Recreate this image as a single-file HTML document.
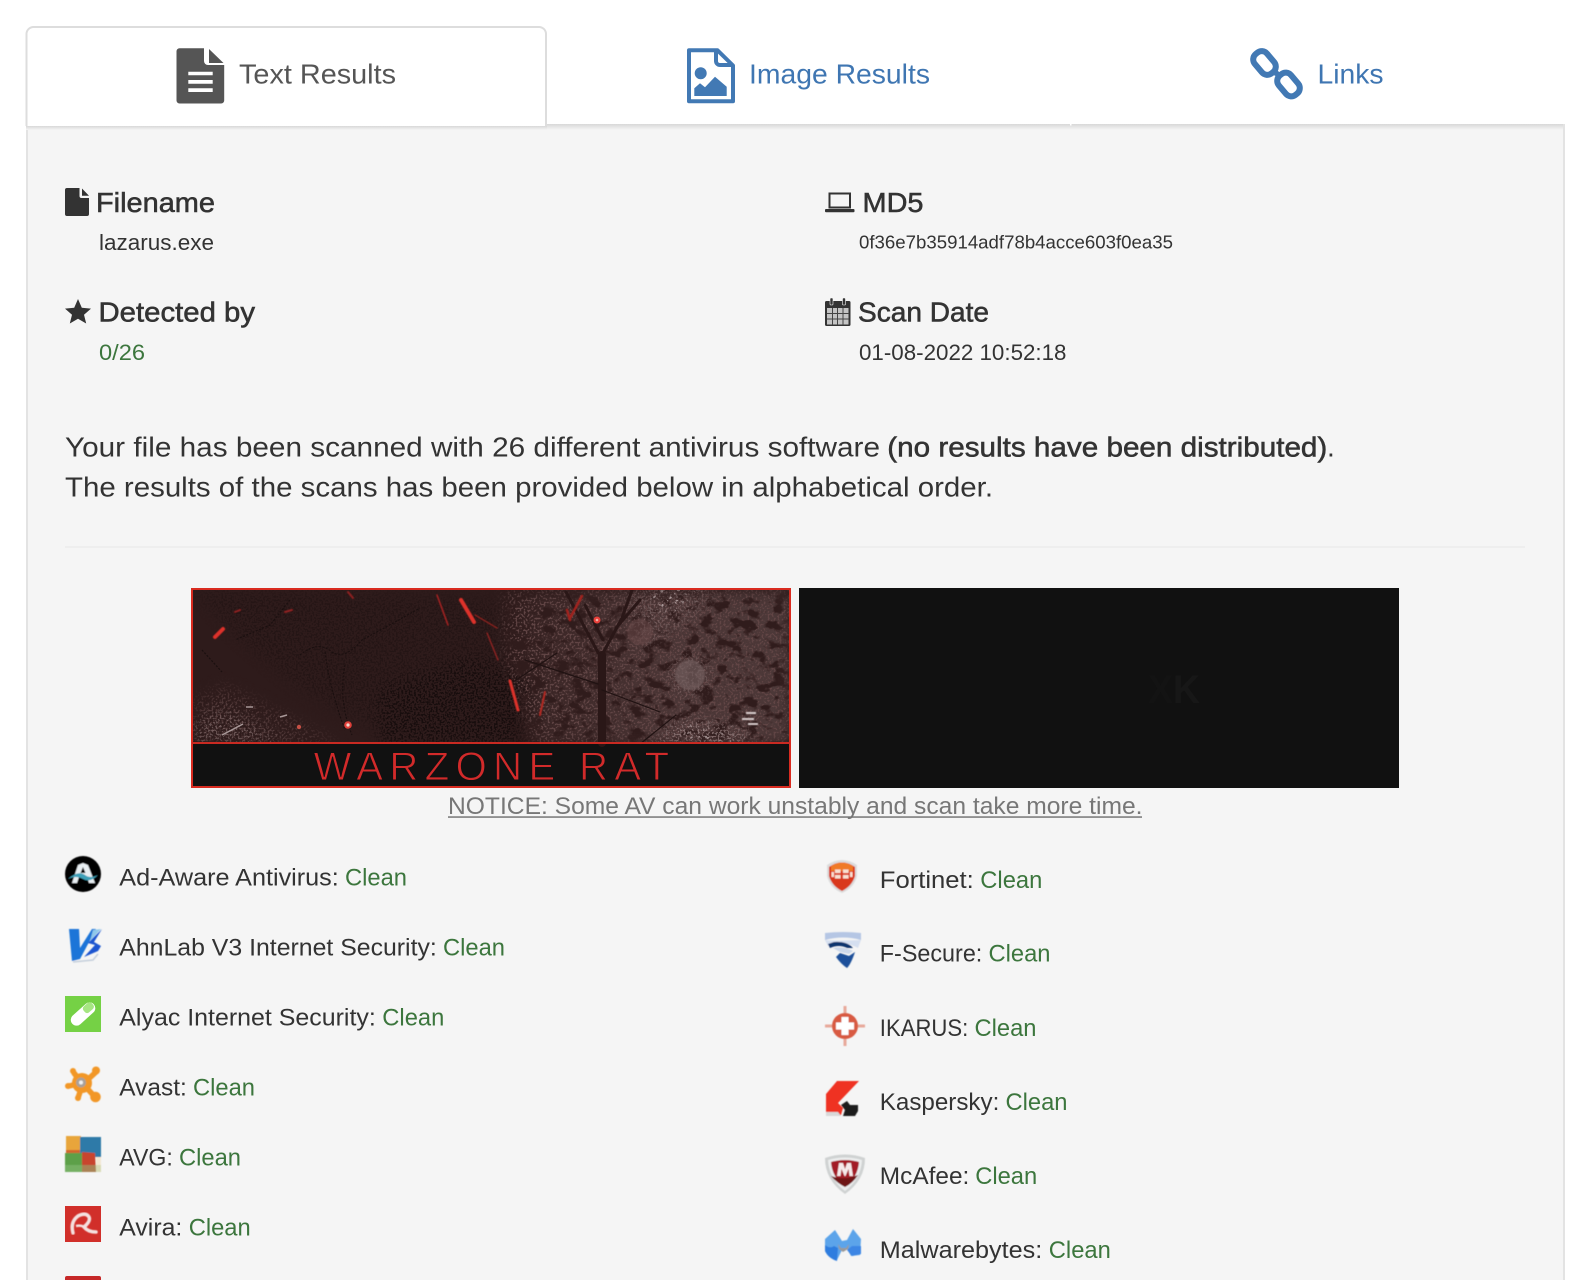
<!DOCTYPE html>
<html lang="en"><head><meta charset="utf-8"><title>Scan Results</title>
<style>
html,body{margin:0;padding:0;background:#fff;width:1590px;height:1280px;overflow:hidden}
svg{display:block}
text{font-family:"Liberation Sans",sans-serif;white-space:pre}
.h{font-size:28px;fill:#333;stroke:#333;stroke-width:.55px}
.v{font-size:22px;fill:#333}
.p{font-size:28px;fill:#333}
.r{font-size:24px;fill:#333}
.c{font-size:24px;fill:#3c763d}
.t{font-size:28px}
</style></head><body>
<svg xmlns="http://www.w3.org/2000/svg" width="1590" height="1280" viewBox="0 0 1590 1280">
<defs>
<linearGradient id="topsh" x1="0" y1="0" x2="0" y2="1"><stop offset="0" stop-color="#d8d8d8"/><stop offset="1" stop-color="#f5f5f5"/></linearGradient>
<linearGradient id="rbase" x1="0" y1="0" x2="1" y2="0"><stop offset="0" stop-color="#2e1b1b"/><stop offset=".18" stop-color="#3c2727"/><stop offset=".55" stop-color="#4a3535"/><stop offset="1" stop-color="#4c3838"/></linearGradient>
<filter id="fDark" x="0" y="0" width="100%" height="100%" color-interpolation-filters="sRGB"><feTurbulence type="fractalNoise" baseFrequency=".55" numOctaves="1" seed="4"/><feColorMatrix values="0 0 0 0 .09 0 0 0 0 .05 0 0 0 0 .05 9 0 0 0 -4.3"/></filter>
<filter id="fMid" x="0" y="0" width="100%" height="100%" color-interpolation-filters="sRGB"><feTurbulence type="fractalNoise" baseFrequency=".5" numOctaves="1" seed="9"/><feColorMatrix values="0 0 0 0 .38 0 0 0 0 .27 0 0 0 0 .27 9 0 0 0 -4.6"/></filter>
<filter id="fLight" x="0" y="0" width="100%" height="100%" color-interpolation-filters="sRGB"><feTurbulence type="fractalNoise" baseFrequency=".5" numOctaves="1" seed="17"/><feColorMatrix values="0 0 0 0 .55 0 0 0 0 .46 0 0 0 0 .46 9 0 0 0 -4.7"/></filter>
<filter id="fBlot" x="0" y="0" width="100%" height="100%" color-interpolation-filters="sRGB"><feTurbulence type="fractalNoise" baseFrequency=".07 .1" numOctaves="3" seed="21"/><feColorMatrix values="0 0 0 0 .19 0 0 0 0 .11 0 0 0 0 .11 7 0 0 0 -3.6"/></filter>
<filter id="fWhite" x="0" y="0" width="100%" height="100%" color-interpolation-filters="sRGB"><feTurbulence type="fractalNoise" baseFrequency=".28" numOctaves="2" seed="6"/><feColorMatrix values="0 0 0 0 .82 0 0 0 0 .76 0 0 0 0 .76 14 0 0 0 -9"/></filter>
<filter id="b3"><feGaussianBlur stdDeviation="7"/></filter>
<filter id="b1"><feGaussianBlur stdDeviation=".6"/></filter>
<filter id="b0"><feGaussianBlur stdDeviation=".45"/></filter>
<mask id="mDark" maskUnits="userSpaceOnUse" x="190" y="588" width="600" height="156"><rect x="190" y="588" width="600" height="156" fill="#000"/><g filter="url(#b3)"><polygon points="195,592 330,592 500,600 520,742 400,742 300,690 240,640" fill="#666"/><polygon points="380,690 470,660 530,680 520,745 380,745" fill="#fff"/></g></mask>
<mask id="mMid" maskUnits="userSpaceOnUse" x="190" y="588" width="600" height="156"><rect x="190" y="588" width="600" height="156" fill="#000"/><g filter="url(#b3)"><polygon points="505,592 790,592 790,744 535,744 505,660" fill="#fff"/><polygon points="195,744 195,700 225,685 340,744" fill="#999"/></g></mask>
<mask id="mLight" maskUnits="userSpaceOnUse" x="190" y="588" width="600" height="156"><rect x="190" y="588" width="600" height="156" fill="#000"/><g filter="url(#b3)"><polygon points="195,744 195,722 225,708 290,744" fill="#aaa"/><polygon points="620,592 720,592 680,630 640,650" fill="#777"/><circle cx="690" cy="675" r="22" fill="#888"/><polygon points="650,744 680,718 745,730 750,744" fill="#fff"/></g></mask>
<mask id="mWhite" maskUnits="userSpaceOnUse" x="190" y="588" width="600" height="156"><rect x="190" y="588" width="600" height="156" fill="#000"/><g filter="url(#b3)"><polygon points="640,590 720,590 660,615" fill="#ccc"/><polygon points="675,744 690,726 745,735 745,744" fill="#ddd"/></g></mask>
</defs>

<!-- panel -->
<rect x="26" y="124" width="1539" height="1170" rx="3" fill="#f5f5f5"/>
<rect x="26" y="124" width="1539" height="6" fill="url(#topsh)"/>
<rect x="26" y="124" width="2" height="1160" fill="#e3e3e3"/>
<rect x="1563" y="124" width="2" height="1160" fill="#e3e3e3"/>

<!-- active tab -->
<path d="M26.500 126 V34 a7 7 0 0 1 7 -7 H539 a7 7 0 0 1 7 7 V126 Z" fill="#fff"/>
<path d="M26.500 126 V34 a7 7 0 0 1 7 -7 H539 a7 7 0 0 1 7 7 V126" fill="none" stroke="#ddd" stroke-width="2"/>
<rect x="26" y="126" width="521" height="4" fill="url(#topsh)"/>
<rect x="1070" y="123" width="1.500" height="2.500" fill="#fff"/>

<!-- tab icons -->
<path fill-rule="evenodd" fill="#555" d="M179.500 48.300 H204 V61 a4 4 0 0 0 4 4 H224.200 V100.500 a3 3 0 0 1 -3 3 H179.500 a3 3 0 0 1 -3 -3 V51.300 a3 3 0 0 1 3 -3 Z M188.300 71.700 V75.300 H212.700 V71.700 Z M188.300 80 V83.700 H212.700 V80 Z M188.300 88.300 V92 H212.700 V88.300 Z"/>
<path fill="#555" d="M209 49 L223.500 63 H209 Z"/>
<text class="t" x="239" y="83.500" fill="#555" textLength="157" lengthAdjust="spacingAndGlyphs">Text Results</text>

<path fill="none" stroke="#4279b4" stroke-width="4" stroke-linejoin="round" d="M689 50.300 H717.500 L733 65.500 V101.300 H689 Z"/>
<path fill="none" stroke="#4279b4" stroke-width="4" d="M716 50.300 V61 a4 4 0 0 0 4 4 H733"/>
<circle cx="700.700" cy="73.300" r="6" fill="#4279b4"/>
<path fill="#4279b4" d="M694.300 96 V88.300 L700 83.300 L705 87.300 L715 76.700 L726.700 86.700 V96 Z"/>
<text class="t" x="749" y="83.500" fill="#3f76b2" textLength="181" lengthAdjust="spacingAndGlyphs">Image Results</text>

<g fill="none" stroke="#4279b4" stroke-width="6">
<rect x="-8" y="-12.500" width="16" height="25" rx="7" transform="translate(1264.500 63) rotate(-40)"/>
<rect x="-8" y="-12.500" width="16" height="25" rx="7" transform="translate(1288.500 84.500) rotate(-40)"/>
<path d="M1271 72 L1279 76 M1275 70 L1282 77" stroke-width="3"/>
</g>
<text class="t" x="1317.500" y="83.500" fill="#3f76b2" textLength="66" lengthAdjust="spacingAndGlyphs">Links</text>

<!-- info -->
<path fill="#333" d="M67 188 H79.500 V196 a2 2 0 0 0 2 2 H89 V214 a2 2 0 0 1 -2 2 H67 a2 2 0 0 1 -2 -2 V190 a2 2 0 0 1 2 -2 Z M82 188.500 L89 195.700 H82 Z"/>
<text class="h" x="96" y="212" textLength="119" lengthAdjust="spacingAndGlyphs">Filename</text>
<text class="v" x="99" y="250" textLength="115" lengthAdjust="spacingAndGlyphs">lazarus.exe</text>

<path fill="#333" d="M78 299 L81.800 307.800 L91 308.600 L84 314.700 L86.200 323.500 L78 318.800 L69.800 323.500 L72 314.700 L65 308.600 L74.200 307.800 Z"/>
<text class="h" x="98.500" y="321.700" textLength="156.500" lengthAdjust="spacingAndGlyphs">Detected by</text>
<text class="v" x="99" y="360" style="fill:#3c763d" textLength="46" lengthAdjust="spacingAndGlyphs">0/26</text>

<rect x="829.500" y="193.500" width="20.500" height="14" fill="none" stroke="#333" stroke-width="2"/>
<rect x="825" y="209" width="29.500" height="3.300" rx="1" fill="#333"/>
<text class="h" x="862.500" y="212" textLength="61" lengthAdjust="spacingAndGlyphs">MD5</text>
<text x="859" y="248.500" font-size="18.500" fill="#333" textLength="314" lengthAdjust="spacingAndGlyphs">0f36e7b35914adf78b4acce603f0ea35</text>

<rect x="825" y="301" width="25.500" height="25" rx="1.500" fill="#333"/>
<rect x="827" y="308" width="21.500" height="16.500" fill="#c4c4c4"/>
<g fill="#444"><rect x="832" y="308" width="1" height="17"/><rect x="837" y="308" width="1" height="17"/><rect x="842.500" y="308" width="1" height="17"/><rect x="827" y="313" width="22" height="1"/><rect x="827" y="318.500" width="22" height="1"/></g>
<rect x="830" y="298" width="3" height="7" rx="1" fill="#333" stroke="#f5f5f5" stroke-width=".6"/>
<rect x="842.500" y="298" width="3" height="7" rx="1" fill="#333" stroke="#f5f5f5" stroke-width=".6"/>
<text class="h" x="858" y="321.700" textLength="131" lengthAdjust="spacingAndGlyphs">Scan Date</text>
<text class="v" x="859" y="360" textLength="207.500" lengthAdjust="spacingAndGlyphs">01-08-2022 10:52:18</text>

<!-- paragraph -->
<text class="p" x="65" y="456.700" textLength="815" lengthAdjust="spacingAndGlyphs">Your file has been scanned with 26 different antivirus software</text>
<text class="p" x="887.300" y="456.700" style="stroke:#333;stroke-width:.55px" textLength="440" lengthAdjust="spacingAndGlyphs">(no results have been distributed)</text>
<text class="p" x="1327" y="456.700">.</text>
<text class="p" x="65" y="496.700" textLength="928" lengthAdjust="spacingAndGlyphs">The results of the scans has been provided below in alphabetical order.</text>
<rect x="65" y="546" width="1460" height="2" fill="#eee"/>

<!-- banner 1 -->
<rect x="191" y="588" width="600" height="200" fill="#111"/>
<rect x="192" y="590" width="597" height="153" fill="#2e1b1b"/>
<rect x="505" y="590" width="284" height="153" fill="url(#rbase)" mask="url(#mMid)"/>
<g mask="url(#mDark)"><rect x="192" y="590" width="597" height="153" filter="url(#fDark)"/></g>
<g mask="url(#mMid)"><rect x="192" y="590" width="597" height="153" filter="url(#fMid)"/></g>
<g mask="url(#mMid)"><rect x="505" y="590" width="284" height="153" filter="url(#fBlot)"/></g>
<g mask="url(#mLight)"><rect x="192" y="590" width="597" height="153" filter="url(#fLight)"/></g>
<g mask="url(#mWhite)"><rect x="192" y="590" width="597" height="153" filter="url(#fWhite)"/></g>
<circle cx="690" cy="675" r="15" fill="#6f5b5b" opacity=".7" filter="url(#b1)"/>
<circle cx="640" cy="632" r="13" fill="#664646" opacity=".6" filter="url(#b1)"/>
<g fill="#d8cdcd" filter="url(#b0)"><rect x="746" y="712" width="10" height="2"/><rect x="742" y="718" width="12" height="2"/><rect x="748" y="723" width="10" height="2"/></g>
<!-- tree and cracks -->
<g fill="none" stroke="#2a1717" stroke-linecap="round">
<path d="M602 743 V655" stroke-width="8"/>
<path d="M602 660 L566 592 M602 655 L622 618 L632 590 M603 640 L585 605 M616 628 L640 600" stroke-width="3"/>
<path d="M513 682 L557 653 M602 690 L660 712 M598 684 L525 660 M640 744 L676 715" stroke="#201212" stroke-width="1.200"/>
</g>
<g fill="none" stroke="#180e0e" stroke-width="1.200" stroke-dasharray="2 1.500" opacity=".85">
<path d="M300 655 Q318 640 332 652 Q345 660 362 640 Q390 625 420 608"/>
<path d="M325 652 Q330 690 345 730 M345 665 Q338 700 352 735"/>
<path d="M202 650 L222 672 M290 600 L270 625 L235 640"/>
</g>
<!-- red streaks -->
<g fill="none" stroke="#dd3029" stroke-linecap="round" filter="url(#b0)">
<path d="M215 637 L223 629" stroke-width="4"/>
<path d="M461 600 L474 622" stroke-width="4"/>
<path d="M437 595 L448 625" stroke="#a82420" stroke-width="1.500"/>
<path d="M475 615 L497 628 M487 633 L498 660" stroke="#962420" stroke-width="1.300"/>
<path d="M510 681 L518 710" stroke-width="3"/>
<path d="M545 692 L540 715" stroke-width="2" stroke="#b52a24"/>
<path d="M348 592 L353 598 M292 610 L285 612 M240 610 L235 612" stroke="#8f2020" stroke-width="2"/>
<path d="M567 610 L570 620 M582 596 L570 618" stroke="#a3201e" stroke-width="2.500"/>
</g>
<circle cx="597" cy="620" r="3.500" fill="#e8403a"/><circle cx="597" cy="620" r="1.300" fill="#f2b0a8"/>
<circle cx="348" cy="725" r="3.800" fill="#e0403a"/><circle cx="348" cy="725" r="1.600" fill="#f2d8d0"/>
<circle cx="299" cy="727" r="2.200" fill="#c55045"/>
<path d="M246 707 L253 707 M222 735 L243 724 M280 717 L287 715" stroke="#a89898" stroke-width="1.500"/>
<!-- banner frame -->
<rect x="192" y="589" width="598" height="198" fill="none" stroke="#d92b20" stroke-width="2"/>
<rect x="192" y="742" width="598" height="2" fill="#c92a22"/>
<text x="313.600" y="780" font-size="40" fill="#d22a2a" stroke="#111" stroke-width=".9" textLength="355.400" lengthAdjust="spacing">WARZONE RAT</text>

<!-- banner 2 -->
<rect x="799" y="588" width="600" height="200" fill="#111"/>
<text x="1148" y="703" font-size="40" font-weight="700" textLength="52" lengthAdjust="spacingAndGlyphs"><tspan fill="#131313">X</tspan><tspan fill="#171717">K</tspan></text>

<!-- notice -->
<text x="448" y="814" font-size="24" fill="#777" textLength="694.500" lengthAdjust="spacingAndGlyphs">NOTICE: Some AV can work unstably and scan take more time.</text>
<rect x="448" y="816.300" width="694" height="1.500" fill="#777"/>

<!-- left list -->
<text class="r" x="119.300" y="885.700" textLength="219.500" lengthAdjust="spacingAndGlyphs">Ad-Aware Antivirus:</text><text class="c" x="345" y="885.700" textLength="62" lengthAdjust="spacingAndGlyphs">Clean</text>
<text class="r" x="119.300" y="955.700" textLength="317.500" lengthAdjust="spacingAndGlyphs">AhnLab V3 Internet Security:</text><text class="c" x="443" y="955.700" textLength="62" lengthAdjust="spacingAndGlyphs">Clean</text>
<text class="r" x="119.300" y="1025.700" textLength="256.500" lengthAdjust="spacingAndGlyphs">Alyac Internet Security:</text><text class="c" x="382.300" y="1025.700" textLength="62" lengthAdjust="spacingAndGlyphs">Clean</text>
<text class="r" x="119.300" y="1095.700" textLength="67.500" lengthAdjust="spacingAndGlyphs">Avast:</text><text class="c" x="193" y="1095.700" textLength="62" lengthAdjust="spacingAndGlyphs">Clean</text>
<text class="r" x="119.300" y="1165.700" textLength="53.500" lengthAdjust="spacingAndGlyphs">AVG:</text><text class="c" x="179" y="1165.700" textLength="62" lengthAdjust="spacingAndGlyphs">Clean</text>
<text class="r" x="119.300" y="1235.700" textLength="63" lengthAdjust="spacingAndGlyphs">Avira:</text><text class="c" x="188.700" y="1235.700" textLength="62" lengthAdjust="spacingAndGlyphs">Clean</text>

<!-- right list -->
<text class="r" x="879.800" y="888" textLength="94" lengthAdjust="spacingAndGlyphs">Fortinet:</text><text class="c" x="980.300" y="888" textLength="62" lengthAdjust="spacingAndGlyphs">Clean</text>
<text class="r" x="879.800" y="961.500" textLength="102.500" lengthAdjust="spacingAndGlyphs">F-Secure:</text><text class="c" x="988.500" y="961.500" textLength="62" lengthAdjust="spacingAndGlyphs">Clean</text>
<text class="r" x="879.800" y="1036" textLength="88.500" lengthAdjust="spacingAndGlyphs">IKARUS:</text><text class="c" x="974.500" y="1036" textLength="62" lengthAdjust="spacingAndGlyphs">Clean</text>
<text class="r" x="879.800" y="1110" textLength="119.500" lengthAdjust="spacingAndGlyphs">Kaspersky:</text><text class="c" x="1005.500" y="1110" textLength="62" lengthAdjust="spacingAndGlyphs">Clean</text>
<text class="r" x="879.800" y="1184" textLength="89.500" lengthAdjust="spacingAndGlyphs">McAfee:</text><text class="c" x="975.200" y="1184" textLength="62" lengthAdjust="spacingAndGlyphs">Clean</text>
<text class="r" x="879.800" y="1258" textLength="162.500" lengthAdjust="spacingAndGlyphs">Malwarebytes:</text><text class="c" x="1048.800" y="1258" textLength="62" lengthAdjust="spacingAndGlyphs">Clean</text>

<!-- left logos -->
<g transform="translate(65 856)" filter="url(#b0)">
<circle cx="18" cy="18" r="18" fill="#050505"/>
<path d="M18 7 L13 9 L7 27 H12 L14 21 H22 L24 27 H30 L23 9 Z" fill="#e8eef2"/>
<path d="M15.500 17 H20.500 L18 11 Z" fill="#050505"/>
<path d="M3 23 Q13 14 20 19 Q25 23 33 19 Q25 27 18 23 Q11 19 3 23 Z" fill="#3da0b8"/>
</g>
<g transform="translate(65 926)" filter="url(#b0)">
<path d="M4 3 H14 L15 22 L27 3 H31 L15 33 L7 35 Z" fill="#1b74d8"/>
<path d="M37 3 L23 17 L30 19 L19 31 L33 25 L36 20 L29 16 Z" fill="#1a55d0"/>
<path d="M28 4 L36 3 L25 15 Z" fill="#8fc8ea"/>
<path d="M8 36 L28 34 L33 28" fill="none" stroke="#c5cfdb" stroke-width="1.500"/>
</g>
<g transform="translate(65 996)">
<rect width="36" height="36" fill="#75d145"/>
<rect x="3.500" y="12.300" width="29" height="11.500" rx="5.700" fill="#fff" transform="rotate(-42 18 18)"/>
<rect x="19" y="6" width="8" height="11" rx="3" fill="#a6e682" transform="rotate(48 23 12)"/>
</g>
<g transform="translate(65 1066)" stroke="#f29727" fill="none" stroke-linecap="round" filter="url(#b0)">
<path d="M16 16 L9 7 M17 17 L4 20 M18 18 L31 6 M19 19 L30 31 M17 20 L13 32" stroke-width="5.500"/>
<circle cx="17" cy="17" r="10" fill="#f29727" stroke="none"/>
<circle cx="16" cy="16.500" r="5" fill="#a8a099" stroke="none"/>
<circle cx="16" cy="16.500" r="2" fill="#f0f0f0" stroke="none"/>
<g fill="#f29727" stroke="none"><circle cx="8" cy="5" r="3"/><circle cx="31" cy="4.500" r="4"/><circle cx="3" cy="20" r="3"/><circle cx="30.500" cy="31" r="5.300"/><circle cx="13" cy="32" r="3"/></g>
</g>
<g transform="translate(65 1136)" filter="url(#b1)">
<rect x="1" y="0" width="15" height="16" fill="#e8a53a"/>
<rect x="15" y="1" width="21" height="20" fill="#2f7aa8"/>
<rect x="0" y="17" width="17" height="19" fill="#5da04a"/>
<path d="M17 16 L30 17 L31 36 H17 Z" fill="#c8452e"/>
<rect x="0" y="29" width="36" height="7" fill="#8cbf7b" opacity=".5"/>
<rect x="1" y="14" width="14" height="3" fill="#d2662f"/>
<rect x="31" y="21" width="5" height="15" fill="#f0d9b0" opacity=".5"/>
</g>
<g transform="translate(65 1206)">
<rect width="36" height="36" fill="#d12f2a"/>
<g filter="url(#b0)"><path d="M8 27 Q5 16 13 10 Q21 6 24 11 Q26 15 19 21 Q23 26 31 26" fill="none" stroke="#f4e0df" stroke-width="3.500" stroke-linecap="round"/>
<path d="M11 20 Q16 19 19 21" fill="none" stroke="#f4e0df" stroke-width="2.500"/></g>
</g>
<path d="M65 1280 V1278 a2 2 0 0 1 2 -2 H99 a2 2 0 0 1 2 2 V1280 Z" fill="#c62828"/>

<!-- right logos -->
<g transform="translate(826 858)" filter="url(#b0)">
<path d="M1 7 Q16 -3 31 7 V18 Q28 30 16 35 Q4 30 1 18 Z" fill="#dcdcdc"/>
<path d="M3 9 Q16 0 29 9 V18 Q26 28 16 33 Q6 28 3 18 Z" fill="#d9381e"/>
<path d="M5 8 Q16 1 27 8 V13 H5 Z" fill="#f07a28"/>
<g fill="#f8e0d2"><rect x="9" y="11.500" width="5.500" height="3.500"/><rect x="17" y="11.500" width="5.500" height="3.500"/><rect x="9" y="17" width="5.500" height="3.500"/><rect x="17" y="17" width="5.500" height="3.500"/><rect x="24" y="14" width="2.500" height="5"/><rect x="5.500" y="14" width="2.500" height="5"/></g>
</g>
<g transform="translate(825 932)" filter="url(#b0)">
<path d="M0 1 Q18 -1 36 1 V8 Q18 3 0 8 Z" fill="#b5c6e4"/>
<path d="M0 8 Q10 9 36 8 L33 16 Q22 10 13 13 L3 14 Z" fill="#d5dff0"/>
<path d="M3 12 L9 10 Q22 9 28 16 L22 16 Q14 12 5 16 Z" fill="#10356e"/>
<path d="M15 21 L24 24 L30 20 Q26 32 22 36 Q16 32 11 25 Z" fill="#1b4f9a"/>
<path d="M8 16 Q18 14 28 19 L24 22 L15 20 Z" fill="#ccd8ea"/>
</g>
<g transform="translate(825 1006)" filter="url(#b0)">
<rect x="18.500" y="0" width="3" height="40" fill="#e8a89a"/><rect x="0" y="18.500" width="40" height="3" fill="#e8a89a"/>
<circle cx="20" cy="20" r="13" fill="#d85a42"/>
<rect x="16.500" y="11" width="7" height="18" fill="#fff"/><rect x="11" y="16.500" width="18" height="7" fill="#fff"/>
</g>
<g transform="translate(825 1081)" filter="url(#b0)">
<path d="M1 13 L12 0 H34 L13 22 L18 27 L16 34 H1 Z" fill="#ef3322"/>
<path d="M1 31 H13 L16 35 H1 Z" fill="#d8d8d8"/>
<path d="M16 24 L22 20 L25 24 L33 24 V30 L30 35 H18 L20 29 Z" fill="#1c1c1c"/>
</g>
<g transform="translate(825 1154)" filter="url(#b0)">
<path d="M0 4 Q20 -3 40 4 Q40 26 20 40 Q0 26 0 4 Z" fill="#cfd2d2"/>
<path d="M3 6 Q20 1 37 6 Q36 25 20 37 Q4 25 3 6 Z" fill="#eceeee"/>
<path d="M6 8 Q20 4 34 8 Q33 23 20 33 Q7 23 6 8 Z" fill="#a31f26"/>
<path d="M6 22 Q20 27 33 21 Q28 29 20 33 Q12 29 6 22 Z" fill="#6e1319"/>
<path d="M12 22 L14 9 H18 L20 15 L22 9 H26 L28 22 H24.500 L23.500 15 L20.500 22 H19.500 L16.500 15 L15.500 22 Z" fill="#f6eaea"/>
</g>
<g transform="translate(825 1229)" filter="url(#b0)">
<path d="M0 10 L10 1 L17 12 L22 11 L28 0 L36 10 L35 26 L26 27 L22 20 L18 19 L12 31 Q4 28 0 22 Z" fill="#5ba4ea"/>
<path d="M0 16 Q5 20 9 17 L13 19 L12 32 Q3 29 0 22 Z" fill="#2f7ddf"/>
<path d="M22 21 L27 17 L36 17 V25 L27 27 Z" fill="#3c86e4"/>
<path d="M13 15 L16 19 H21 L24 15 L23 20 L18 23 L14 20 Z" fill="#9a9a9a"/>
</g>
</svg>
</body></html>
